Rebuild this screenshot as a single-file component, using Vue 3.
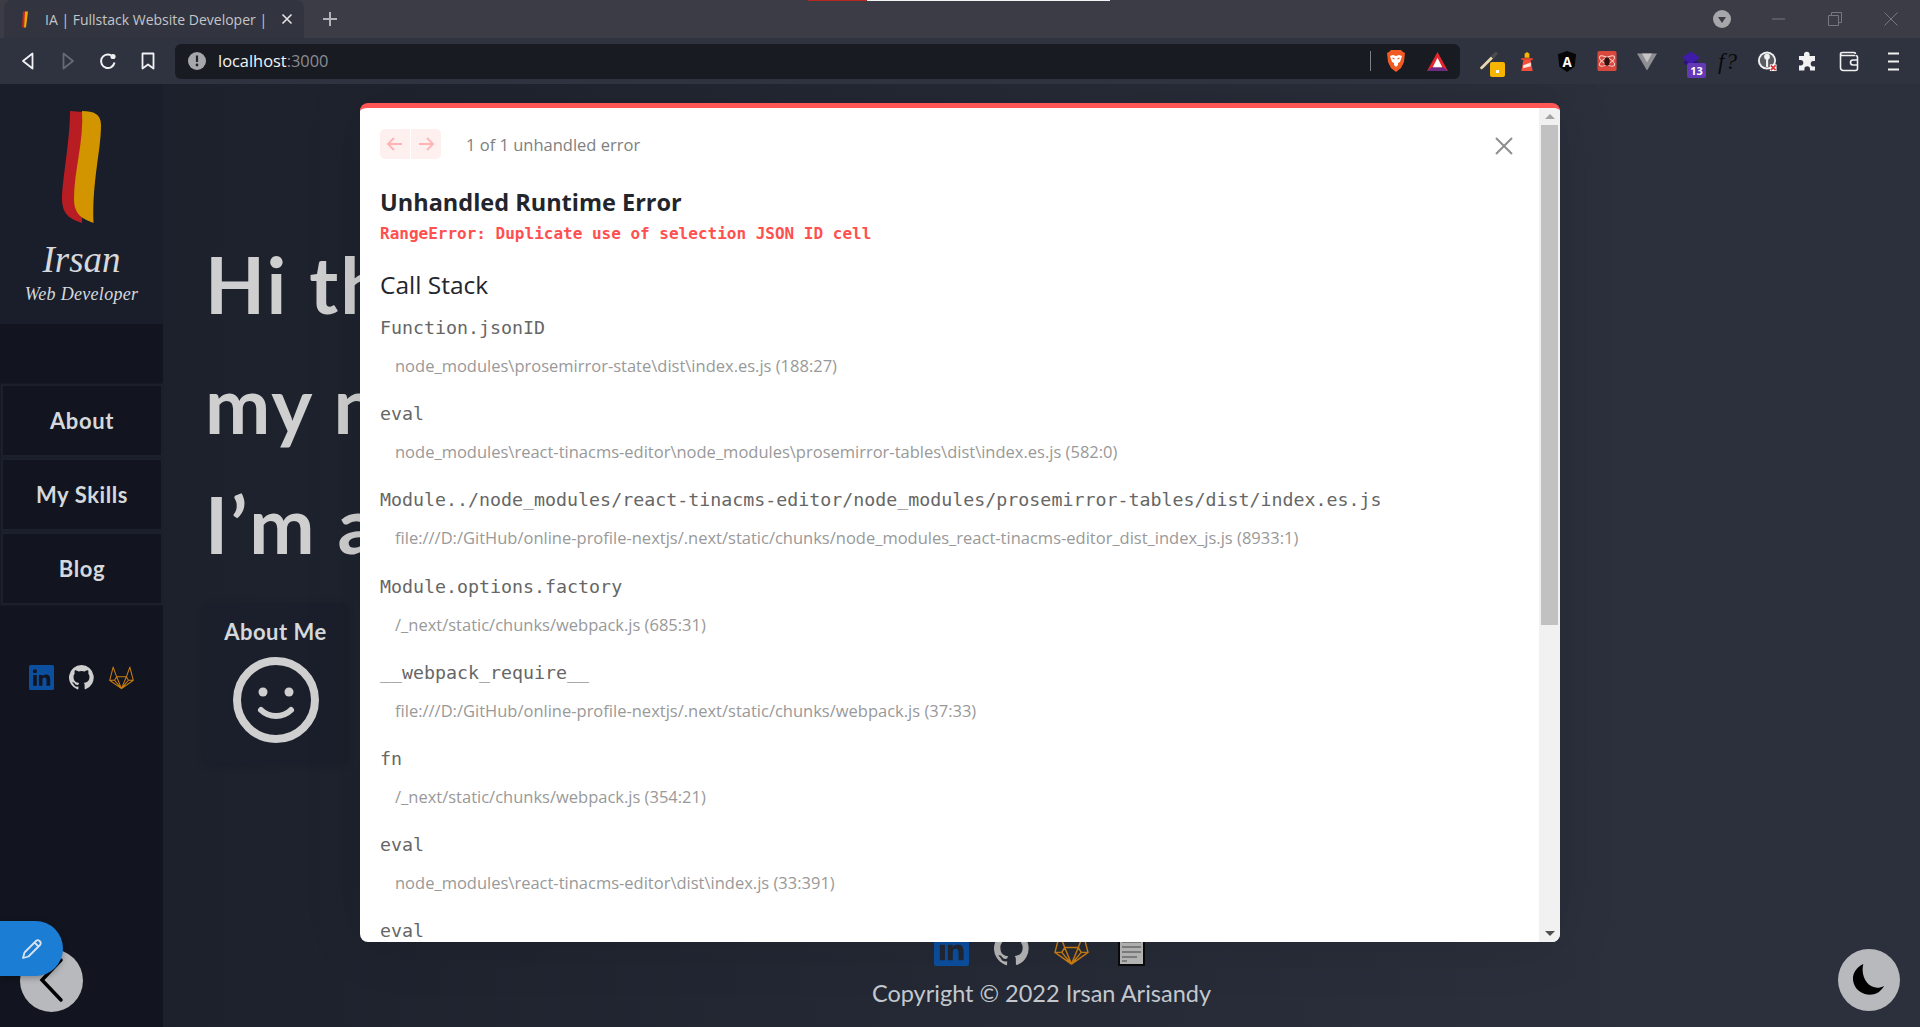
<script setup>
const nav = ['About', 'My Skills', 'Blog']
const frames = [
  ['Function.jsonID', 'node_modules\\prosemirror-state\\dist\\index.es.js (188:27)'],
  ['eval', 'node_modules\\react-tinacms-editor\\node_modules\\prosemirror-tables\\dist\\index.es.js (582:0)'],
  ['Module../node_modules/react-tinacms-editor/node_modules/prosemirror-tables/dist/index.es.js', 'file:///D:/GitHub/online-profile-nextjs/.next/static/chunks/node_modules_react-tinacms-editor_dist_index_js.js (8933:1)'],
  ['Module.options.factory', '/_next/static/chunks/webpack.js (685:31)'],
  ['__webpack_require__', 'file:///D:/GitHub/online-profile-nextjs/.next/static/chunks/webpack.js (37:33)'],
  ['fn', '/_next/static/chunks/webpack.js (354:21)'],
  ['eval', 'node_modules\\react-tinacms-editor\\dist\\index.js (33:391)'],
  ['eval', 'node_modules\\react-tinacms-editor\\dist\\index.js (33:391)']
]
</script>

<template>
  <div class="window">
    <div class="progress"><i class="pr"></i><i class="pw"></i></div>
    <header class="tabstrip">
      <div class="tab">
        <svg class="favicon" viewBox="0 0 8 16"><path d="M2 0h3L3 16H1z" fill="#c22"/><path d="M4 0h3L5 16H3z" fill="#f0a800"/></svg>
        <span class="tabtitle">IA | Fullstack Website Developer |</span>
        <svg class="tabx" viewBox="0 0 12 12"><path d="M1.500 1.500l9 9M10.500 1.500l-9 9" stroke="#e4e4e6" stroke-width="1.600"/></svg>
      </div>
      <svg class="newtab" viewBox="0 0 16 16"><path d="M8 1v14M1 8h14" stroke="#b4b4b8" stroke-width="2"/></svg>
      <div class="winctl">
        <svg class="wdrop" viewBox="0 0 18 18"><circle cx="9" cy="9" r="9" fill="#a7a7ab"/><path d="M5 7h8l-4 6z" fill="#3c3c46"/></svg>
        <svg class="wbtn" viewBox="0 0 14 14"><path d="M0 7h13" stroke="#77777d"/></svg>
        <svg class="wbtn" viewBox="0 0 14 14"><path d="M.5 3.500h10v10H.5zM3.500 3.500v-3h10v10h-3" fill="none" stroke="#77777d"/></svg>
        <svg class="wbtn" viewBox="0 0 14 14"><path d="M.5.5l13 13M13.500.5l-13 13" stroke="#77777d"/></svg>
      </div>
    </header>
    <div class="toolbar">
      <div class="navbtns">
        <svg class="tb" viewBox="0 0 20 20"><path d="M14.500 2.500v15L5 10z" fill="none" stroke="#f2f2f4" stroke-width="1.800" stroke-linejoin="round"/></svg>
        <svg class="tb" viewBox="0 0 20 20"><path d="M5.500 2.500v15L15 10z" fill="none" stroke="#666a74" stroke-width="1.800" stroke-linejoin="round"/></svg>
        <svg class="tb" viewBox="0 0 20 20"><path d="M16.500 11.500A6.800 6.800 0 1 1 13 4.200" fill="none" stroke="#f2f2f4" stroke-width="2"/><circle cx="15" cy="5.500" r="2.600" fill="#f2f2f4"/></svg>
        <svg class="tb" viewBox="0 0 20 20"><path d="M4.500 2.500h11v15L10 13.500l-5.500 4z" fill="none" stroke="#f2f2f4" stroke-width="1.800" stroke-linejoin="round"/></svg>
      </div>
      <div class="addr">
        <svg class="info" viewBox="0 0 18 18"><circle cx="9" cy="9" r="9" fill="#a6a7ab"/><path d="M9 3.500v6.500" stroke="#23262e" stroke-width="2.200"/><circle cx="9" cy="13" r="1.400" fill="#23262e"/></svg>
        <span class="url">localhost<em>:3000</em></span>
        <span class="sep"></span>
        <svg class="brave" viewBox="0 0 20 22"><path d="M5 0h10l2 2 2 1-1 9-3 6-5 4-5-4-3-6-1-9 2-1z" fill="#f15a22"/><path d="M4 6l3-1 3 1 3-1 3 1-2 6-2 1v2l-2 2-2-2v-2l-2-1z" fill="#fff"/><path d="M6.500 8l2 1M13.500 8l-2 1" stroke="#f15a22" stroke-width="1.200"/></svg>
        <svg class="bat" viewBox="0 0 24 22"><path d="M12 1l11 20H1z" fill="#e5262c"/><path d="M1 21l5-4h12l5 4z" fill="#6d2a87"/><path d="M12 7l5 10H7z" fill="#fff"/></svg>
      </div>
      <div class="exts">
        <span class="ext"><svg viewBox="0 0 20 20"><path d="M0 16L11 5l2 2L3 17 1 18z" fill="#e8d9b0"/><path d="M11 4l5-4 2 2-4 5z" fill="#4c4c4c"/></svg><b class="yel"></b></span>
        <span class="ext"><svg viewBox="0 0 20 22"><path d="M6.500 8h7L16 21H4z" fill="#f0503c"/><path d="M7.500 3L10 1l2.500 2v4h-5z" fill="#f8b400"/><path d="M4 7.500h12v2H4z" fill="#e8452f"/><path d="M6 15l8-3v4l-8 2z" fill="#fde9e0"/></svg></span>
        <span class="ext"><svg viewBox="0 0 20 22"><path d="M10 0l9.500 3.500-1.500 13L10 22l-8-5.500L.5 3.500z" fill="#060606"/><text x="10" y="16.500" text-anchor="middle" class="ang">A</text></svg></span>
        <span class="ext"><svg viewBox="0 0 20 22"><rect width="20" height="21" rx="2" fill="#d9483d"/><ellipse cx="10" cy="10.500" rx="9" ry="3.500" fill="none" stroke="#f6d7d0" transform="rotate(30 10 10.500)"/><ellipse cx="10" cy="10.500" rx="9" ry="3.500" fill="none" stroke="#f6d7d0" transform="rotate(-30 10 10.500)"/><ellipse cx="10" cy="11" rx="2.800" ry="4.500" fill="#301010"/></svg></span>
        <span class="ext"><svg viewBox="0 0 20 20"><path d="M0 2h20L10 19z" fill="#8f8f93"/><path d="M5 2h10l-5 9z" fill="#c4c4c8"/></svg></span>
        <span class="ext"><svg viewBox="0 0 20 20"><path d="M2 11l8-6 8 6-8 6z" fill="#2c1280"/><path d="M10 0l9 6-9 7-9-7z" fill="#3f1ca8"/></svg><b class="num">13</b></span>
        <span class="ext fq">f?</span>
        <span class="ext"><svg viewBox="0 0 20 22"><circle cx="10" cy="10" r="9.500" fill="#f1f1f1"/><circle cx="10" cy="10" r="7.500" fill="#5a5c62"/><circle cx="10" cy="6" r="3" fill="#f1f1f1"/><path d="M9 8h2.200v9H9z" fill="#f1f1f1"/><rect x="13" y="14" width="7" height="7" fill="#fff"/><path d="M14 15l5 5M19 15l-5 5" stroke="#d33" stroke-width="1.800"/></svg></span>
        <span class="ext"><svg viewBox="0 0 20 20"><path d="M7 3a2.800 2.800 0 0 1 5.600 0v1.500H18v5h-1.500a2.800 2.800 0 0 0 0 5.600H18V19h-5v-1.500a2.800 2.800 0 0 0-5.600 0V19H2v-5H3.500a2.800 2.800 0 0 0 0-5.600H2V4.500h5z" fill="#f1f1f1"/></svg></span>
        <span class="ext"><svg viewBox="0 0 20 20"><path d="M16 4H3.500C2.500 4 1.500 3.200 1.500 2.500S2.500 1 3.500 1H15c1 0 1.500.8 1.500 1.500M1.500 2.500V16c0 2 1 3 3 3h12c1.200 0 2-.8 2-2V6c0-1.200-.8-2-2-2M18.500 8.500H14a2.500 2.500 0 0 0 0 5h4.500z" fill="none" stroke="#f1f1f1" stroke-width="1.600"/></svg></span>
        <span class="ext"><svg viewBox="0 0 20 20"><path d="M6 2h11M6 10h11M6 18h11" stroke="#f1f1f1" stroke-width="2"/></svg></span>
      </div>
    </div>

    <div class="page">
      <aside class="sidebar">
        <div class="brand">
          <svg class="logo" viewBox="0 0 40 112"><path d="M8 0l13 1-1 111C12 109 0 106 0 88 0 70 8 30 8 0z" fill="#b81d24"/><path d="M20 0c12 0 19 3 19 14 0 26-9 56-7.500 98C22 108 12 105 12 88c0-28 10-58 8-88z" fill="#d29500"/></svg>
          <div class="bname">Irsan</div>
          <div class="brole">Web Developer</div>
        </div>
        <div class="sidedark">
          <nav class="navlist">
            <a v-for="n in nav" :key="n" class="navitem">{{ n }}</a>
          </nav>
          <div class="socials">
            <svg viewBox="0 0 24 24" class="s25"><rect width="24" height="24" rx="1.500" fill="#0b4f9e"/><path d="M4 9.500h3.500V20H4zM5.700 4a2 2 0 1 1 0 4 2 2 0 0 1 0-4zM9.500 9.500h3.300V11c.6-1 1.800-1.800 3.500-1.800 3.300 0 4 2.200 4 5V20h-3.500v-5.200c0-1.300-.2-2.700-1.900-2.700s-2 1.300-2 2.700V20H9.500z" fill="#12151f"/></svg>
            <svg viewBox="0 0 16 16" class="s25"><path d="M8 0a8 8 0 0 0-2.500 15.600c.4.100.5-.2.500-.4v-1.400c-2.200.5-2.700-1-2.700-1-.4-.9-.9-1.200-.9-1.200-.7-.5.100-.5.100-.5.800.100 1.200.8 1.200.8.700 1.200 1.900.9 2.300.7.100-.5.300-.9.500-1.100-1.800-.2-3.600-.9-3.600-4 0-.9.300-1.600.8-2.100-.100-.2-.4-1 .100-2.100 0 0 .7-.2 2.200.8a7.700 7.700 0 0 1 4 0c1.500-1 2.200-.8 2.200-.8.400 1.100.2 1.900.100 2.100.5.600.8 1.300.8 2.100 0 3.100-1.900 3.700-3.700 3.900.3.300.6.800.6 1.500v2.200c0 .2.100.5.600.4A8 8 0 0 0 8 0z" fill="#cfcfcf"/></svg>
            <svg viewBox="0 0 36 34" class="s25"><path d="M18 33L1 21 6 2l5 14h14l5-14 5 19zM1 21h7l10 12 10-12h7M8 21l3-5M28 21l-3-5M11 16l7 17 7-17" fill="none" stroke="#c87d12" stroke-width="1.500" stroke-linejoin="round"/></svg>
          </div>
        </div>
      </aside>

      <main class="main">
        <div class="hero">
          <h1>Hi there,<br />my name is Irsan<br />I’m a Web Developer</h1>
          <section class="cards">
            <div class="card">
              <h3>About Me</h3>
              <svg viewBox="0 0 86 86" class="smile"><circle cx="43" cy="43" r="39" fill="none" stroke="#cfcfcf" stroke-width="8"/><circle cx="30" cy="35" r="4.500" fill="#cfcfcf"/><circle cx="56" cy="35" r="4.500" fill="#cfcfcf"/><path d="M28 53c8 8 22 8 30 0" fill="none" stroke="#cfcfcf" stroke-width="6" stroke-linecap="round"/></svg>
            </div>
          </section>
        </div>
        <footer class="foot">
          <div class="footicons">
            <svg viewBox="0 0 24 24" class="s35"><rect width="24" height="24" rx="1.500" fill="#0b4f9e"/><path d="M4 9.500h3.500V20H4zM9.500 9.500h3.300V11c.6-1 1.800-1.800 3.500-1.800 3.300 0 4 2.200 4 5V20h-3.500v-5.200c0-1.300-.2-2.700-1.900-2.700s-2 1.300-2 2.700V20H9.500z" fill="#222632"/></svg>
            <svg viewBox="0 0 16 16" class="s35"><path d="M8 0a8 8 0 0 0-2.500 15.600c.4.100.5-.2.500-.4v-1.400c-2.200.5-2.700-1-2.700-1-.4-.9-.9-1.200-.9-1.200-.7-.5.100-.5.100-.5.800.100 1.200.8 1.200.8.700 1.200 1.900.9 2.300.7.100-.5.300-.9.500-1.100-1.800-.2-3.600-.9-3.600-4 0-.9.300-1.600.8-2.100-.100-.2-.4-1 .100-2.100 0 0 .7-.2 2.200.8a7.700 7.700 0 0 1 4 0c1.500-1 2.200-.8 2.200-.8.400 1.100.2 1.900.100 2.100.5.600.8 1.300.8 2.100 0 3.100-1.900 3.700-3.700 3.900.3.300.6.800.6 1.500v2.200c0 .2.100.5.600.4A8 8 0 0 0 8 0z" fill="#b5b5b5"/></svg>
            <svg viewBox="0 0 36 34" class="s35"><path d="M18 33L1 21 6 2l5 14h14l5-14 5 19zM1 21h7l10 12 10-12h7M8 21l3-5M28 21l-3-5M11 16l7 17 7-17" fill="none" stroke="#c87d12" stroke-width="1.500" stroke-linejoin="round"/></svg>
            <svg viewBox="0 0 27 35" class="sdoc"><rect x="1" y="1" width="25" height="33" fill="#b9b9b9" stroke="#0a0a0a" stroke-width="2"/><path d="M4 11h19M4 16h19M4 21h19M4 26h15M4 30h5" stroke="#6e6e6e" stroke-width="1.300"/></svg>
          </div>
          <p class="copy">Copyright © 2022 Irsan Arisandy</p>
        </footer>
      </main>

      <button class="editbtn">
        <svg viewBox="0 0 24 24"><path d="M3 21l1.500-5.500L16 4c1-1 2.500-1 3.500 0l.5.5c1 1 1 2.500 0 3.500L8.500 19.500zM14.500 5.500l4 4" fill="none" stroke="#d9e3ee" stroke-width="1.800" stroke-linejoin="round"/></svg>
      </button>
      <button class="backbtn">
        <svg viewBox="0 0 26 48"><path d="M22 3L3 23l19 20" fill="none" stroke="#000" stroke-width="3.500" stroke-linecap="round"/></svg>
      </button>
      <button class="moonbtn">
        <svg viewBox="0 0 36 36"><path d="M12 1C3 5-1 14 2 22c3 9 13 13 21 11 5-1 9-5 11-9-6 4-14 2-18-3-4-5-6-13-4-20z" fill="#000"/></svg>
      </button>

      <div class="modal">
        <div class="modalbody">
          <div class="modalhead">
            <div class="pager">
              <span class="parrow"><svg viewBox="0 0 18 16"><path d="M16 8H2M8 2L2 8l6 6" fill="none" stroke="#ffb3b3" stroke-width="1.800"/></svg></span>
              <span class="parrow"><svg viewBox="0 0 18 16"><path d="M2 8h14M10 2l6 6-6 6" fill="none" stroke="#ffb3b3" stroke-width="1.800"/></svg></span>
            </div>
            <span class="count">1 of 1 unhandled error</span>
            <svg class="closex" viewBox="0 0 18 18"><path d="M1 1l16 16M17 1L1 17" stroke="#8e8e8e" stroke-width="2"/></svg>
          </div>
          <h2 class="errtitle">Unhandled Runtime Error</h2>
          <div class="errmsg">RangeError: Duplicate use of selection JSON ID cell</div>
          <h3 class="stacktitle">Call Stack</h3>
          <div v-for="(f, i) in frames" :key="i" class="frame">
            <div class="fname">{{ f[0] }}</div>
            <div class="fpath">{{ f[1] }}</div>
          </div>
        </div>
        <div class="scrollbar">
          <i class="arrow up"></i>
          <div class="track"><div class="thumb"></div></div>
          <i class="arrow down"></i>
        </div>
      </div>
    </div>
  </div>
</template>

<style>
html, body { margin: 0; height: 100%; overflow: hidden; background: #1c212c; }
</style>

<style scoped>
.window { width: 1920px; height: 1027px; display: flex; flex-direction: column; position: relative; overflow: hidden; font-family: "Noto Sans", "Open Sans", sans-serif; }
.progress { position: absolute; left: 808px; top: 0; height: 1px; display: flex; z-index: 3; }
.pr { width: 59px; background: #b5281f; }
.pw { width: 243px; background: #f4f4f4; }
.tabstrip { height: 38px; flex: none; background: #3c3c46; display: flex; align-items: flex-end; padding-left: 4px; }
.tab { width: 300px; height: 38px; background: #32353f; border-radius: 8px 8px 0 0; display: flex; align-items: center; box-sizing: border-box; padding: 0 11px 0 17px; margin-top: -4px; }
.favicon { width: 8px; height: 19px; flex: none; }
.tabtitle { margin-left: 16px; width: 234px; overflow: hidden; white-space: nowrap; font: 14px "Open Sans", sans-serif; color: #c4c5c9; }
.tabx { width: 12px; height: 12px; margin-left: 3px; flex: none; }
.newtab { width: 16px; height: 16px; margin: 0 0 11px 18px; }
.winctl { margin-left: auto; height: 38px; display: flex; align-items: center; }
.wdrop { width: 18px; height: 18px; margin-right: 41px; }
.wbtn { width: 14px; height: 14px; margin-right: 42px; }
.wbtn:last-child { margin-right: 22px; }
.toolbar { height: 46px; flex: none; background: #2f333f; display: flex; align-items: center; }
.navbtns { width: 175px; display: flex; align-items: center; box-sizing: border-box; padding-left: 18px; gap: 20px; }
.tb { width: 20px; height: 20px; }
.addr { width: 1285px; height: 35px; background: #181b22; border-radius: 6px; display: flex; align-items: center; box-sizing: border-box; padding-left: 13px; }
.info { width: 18px; height: 18px; flex: none; }
.url { margin: -2px 0 0 12px; font: 16.400px "Open Sans", sans-serif; color: #f4f4f6; }
.url em { font-style: normal; color: #8a8c92; }
.sep { width: 1px; height: 20px; background: #7d7f85; margin-left: auto; }
.brave { width: 20px; height: 22px; margin-left: 15px; }
.bat { width: 23px; height: 21px; margin: 0 11px 0 20px; }
.exts { flex: 1; display: grid; grid-template-columns: repeat(11, 40px); align-items: center; padding-left: 20px; }
.ext { position: relative; width: 20px; height: 21px; display: block; }
.ext:nth-child(2), .ext:nth-child(3), .ext:nth-child(4), .ext:nth-child(5), .ext:nth-child(8), .ext:nth-child(9) { margin-left: -3px; }
.ext:nth-child(6) { margin-left: 1px; }
.ext:nth-child(7) { margin-left: -2px; }
.ext:nth-child(10) { margin-left: -1px; }
.ext:nth-child(11) { margin-left: 2px; }
.ext svg { width: 100%; height: 100%; display: block; }
.yel { position: absolute; left: 10px; top: 11px; width: 15px; height: 15px; background: #f7b500; border-radius: 2px; }
.yel::after { content: ""; position: absolute; left: 6px; top: 8px; width: 3px; height: 3px; background: #fff; }
.num { position: absolute; left: 6px; top: 12px; width: 19px; height: 15px; background: #6439b5; color: #fff; border-radius: 2px; font: 700 11px/15px "Open Sans", sans-serif; text-align: center; }
.ang { font: 700 14px "Open Sans", sans-serif; fill: #fff; }
.fq { font: italic 23px/22px "Liberation Serif", serif; color: #0a0a0a; white-space: nowrap; letter-spacing: 1px; }

.page { flex: 1; min-height: 0; display: flex; position: relative; overflow: hidden; background: linear-gradient(90deg, #1a1f2a 0, #2b303c 85%); }
.sidebar { width: 163px; flex: none; background: #1a1e2a; display: flex; flex-direction: column; }
.brand { height: 240px; flex: none; box-sizing: border-box; padding-top: 27px; display: flex; flex-direction: column; align-items: center; }
.logo { width: 40px; height: 112px; }
.bname { margin-top: 17px; font: italic 400 37px/40px "Liberation Serif", serif; color: #d5d8dc; }
.brole { margin-top: 2px; font: italic 400 18px/24px "Liberation Serif", serif; color: #d5d8dc; letter-spacing: .3px; }
.sidedark { flex: 1; background: #12151f; padding-top: 60px; }
.navlist { display: flex; flex-direction: column; }
.navitem { height: 69px; margin: 2px 2px 3px 3px; box-shadow: 0 0 0 2.500px #1b202c; background: #12151f; display: flex; align-items: center; justify-content: center; font: 700 22px "Lato", sans-serif; letter-spacing: .6px; color: #d5d8dc; }
.socials { display: flex; justify-content: center; gap: 15px; margin-top: 59px; }
.s25 { width: 25px; height: 25px; }
.main { flex: 1; display: flex; flex-direction: column; min-width: 0; }
.hero { flex: 1; padding: 0 0 0 42px; }
h1 { margin: 0; padding-top: 140px; font: 700 78px/120px "Lato", sans-serif; letter-spacing: 2px; color: #cfcfcf; white-space: nowrap; }
.cards { margin-top: 19px; display: flex; }
.card { width: 145px; height: 160px; box-sizing: border-box; margin-left: -2px; background: #1b1f2b; border-radius: 8px; box-shadow: 0 2px 8px rgba(0,0,0,.14); display: flex; flex-direction: column; align-items: center; padding-top: 14px; }
.card h3 { margin: 0; font: 700 22px/30px "Lato", sans-serif; letter-spacing: .5px; color: #d5d8dc; }
.smile { width: 86px; height: 86px; margin-top: 10px; }
.foot { flex: none; display: flex; flex-direction: column; align-items: center; }
.footicons { display: flex; gap: 25px; align-items: flex-end; height: 35px; margin-left: -4px; }
.s35 { width: 35px; height: 35px; }
.sdoc { width: 27px; height: 35px; margin-left: 4px; }
.copy { margin: 12px 0 19px; font: 400 23.500px/30px "Lato", sans-serif; color: #c3c8cf; }

button { border: 0; padding: 0; position: absolute; display: flex; align-items: center; justify-content: center; }
.editbtn { left: 0; top: 837px; width: 63px; height: 55px; background: #1b7dd4; border-radius: 0 28px 28px 0; z-index: 2; box-shadow: 0 2px 6px rgba(0,0,0,.3); }
.editbtn svg { width: 24px; height: 24px; }
.backbtn { left: 20px; top: 865px; width: 63px; height: 63px; border-radius: 50%; background: #b8b9bd; }
.backbtn svg { width: 26px; height: 48px; flex: none; }
.moonbtn { right: 20px; top: 865px; width: 62px; height: 62px; border-radius: 50%; background: #b8b9bd; }
.moonbtn svg { width: 34px; height: 34px; }

.modal { position: absolute; left: 360px; top: 19px; width: 1200px; height: 839px; box-sizing: border-box; background: #fff; border-top: 5px solid #ff5555; border-radius: 8px; overflow: hidden; display: flex; z-index: 5; box-shadow: 0 0 60px rgba(0,0,0,.12); color: #22252c; }
.modalbody { flex: 1; padding: 0 20px; overflow: hidden; min-width: 0; }
.modalhead { height: 50px; display: flex; align-items: center; padding-top: 11px; }
.pager { display: flex; gap: 1px; width: 61px; height: 30px; border-radius: 5px; overflow: hidden; }
.parrow { flex: 1; background: #fff0f0; display: flex; align-items: center; justify-content: center; }
.parrow svg { width: 18px; height: 16px; }
.count { margin-left: 25px; font: 16.500px "Open Sans", sans-serif; color: #808080; }
.closex { width: 18px; height: 18px; margin: 4px 6px 0 auto; }
.errtitle { margin: 15px 0 0; font: 700 23.500px/36px "Open Sans", sans-serif; }
.errmsg { margin-top: 2px; font: 700 16px/24px "DejaVu Sans Mono", monospace; color: #ff4f4f; }
.stacktitle { margin: 21px 0 6px; font: 400 24.500px/36px "Open Sans", sans-serif; }
.frame { height: 86.200px; box-sizing: border-box; padding-top: 6px; }
.fname { font: 18.300px/26px "DejaVu Sans Mono", monospace; color: #666; white-space: nowrap; }
.fpath { margin: 12px 0 0 15px; font: 16.500px/26px "Open Sans", sans-serif; color: #999; white-space: nowrap; }
.scrollbar { width: 21px; flex: none; background: #f1f1f1; display: flex; flex-direction: column; align-items: center; }
.track { flex: 1; width: 100%; box-sizing: border-box; padding: 0 2px; }
.thumb { height: 500px; background: #c1c1c1; }
.arrow { width: 0; height: 0; border-left: 5px solid transparent; border-right: 5px solid transparent; margin: 6px 0; }
.up { border-bottom: 5px solid #a3a3a3; }
.down { border-top: 5px solid #505050; }
</style>
